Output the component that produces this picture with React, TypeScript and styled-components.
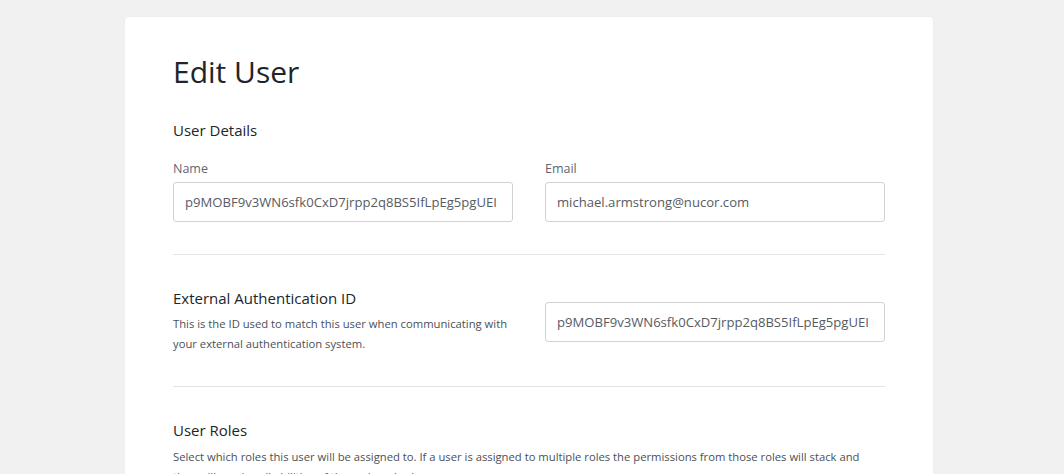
import React from 'react';
import styled, { createGlobalStyle } from 'styled-components';

const GlobalStyle = createGlobalStyle`
  html, body {
    margin: 0;
    padding: 0;
    background: #f1f1f1;
    font-family: "Open Sans", "Noto Sans", sans-serif;
    color: #212529;
  }
`;

const Page = styled.div`
  padding: 17px 0 0 125px;
`;

const Card = styled.div`
  width: 808px;
  box-sizing: border-box;
  background: #fff;
  border-radius: 4px;
  box-shadow: 0 0 2px rgba(0, 0, 0, 0.06);
  padding: 37px 48px 40px;
`;

const Title = styled.h1`
  margin: 0 0 31px;
  font-size: 30px;
  font-weight: 400;
  line-height: 1.2;
`;

const SectionTitle = styled.h2<{ $gap?: number }>`
  margin: 0 0 ${(p) => p.$gap ?? 6}px;
  font-size: 15px;
  font-weight: 400;
  line-height: 1.3;
`;

const Section = styled.section`
  padding: 0 0 32px;
`;

const Divider = styled.hr`
  margin: 0 0 34px;
  border: 0;
  border-top: 1px solid #e3e3e3;
`;

const TwoCols = styled.div<{ $align?: string }>`
  display: grid;
  grid-template-columns: 1fr 1fr;
  column-gap: 32px;
  align-items: ${(p) => p.$align ?? 'start'};
`;

const Field = styled.label`
  display: flex;
  flex-direction: column;
  gap: 5px;
`;

const Label = styled.span`
  font-size: 12.5px;
  color: #5f6670;
  line-height: 1.3;
`;

const Input = styled.input`
  box-sizing: border-box;
  width: 100%;
  height: 40px;
  padding: 0 11px;
  border: 1px solid #d2d2d2;
  border-radius: 3px;
  font-family: inherit;
  font-size: 13.1px;
  color: #555b62;
  background: #fff;
  outline: none;
`;

const Help = styled.p`
  margin: 0;
  font-size: 11.25px;
  line-height: 20px;
  color: #4a5058;
`;

export default function App() {
  return (
    <>
      <GlobalStyle />
      <Page>
        <Card>
          <Title>Edit User</Title>
          <Section>
            <SectionTitle $gap={20}>User Details</SectionTitle>
            <TwoCols>
              <Field>
                <Label>Name</Label>
                <Input readOnly value="p9MOBF9v3WN6sfk0CxD7jrpp2q8BS5IfLpEg5pgUEI" />
              </Field>
              <Field>
                <Label>Email</Label>
                <Input readOnly value="michael.armstrong@nucor.com" />
              </Field>
            </TwoCols>
          </Section>
          <Divider />
          <Section>
            <TwoCols $align="center">
              <div>
                <SectionTitle>External Authentication ID</SectionTitle>
                <Help>
                  This is the ID used to match this user when communicating with your external
                  authentication system.
                </Help>
              </div>
              <Input readOnly value="p9MOBF9v3WN6sfk0CxD7jrpp2q8BS5IfLpEg5pgUEI" />
            </TwoCols>
          </Section>
          <Divider />
          <Section>
            <SectionTitle>User Roles</SectionTitle>
            <Help>
              Select which roles this user will be assigned to. If a user is assigned to multiple
              roles the permissions from those roles will stack and they will receive all abilities
              of the assigned roles.
            </Help>
          </Section>
        </Card>
      </Page>
    </>
  );
}
